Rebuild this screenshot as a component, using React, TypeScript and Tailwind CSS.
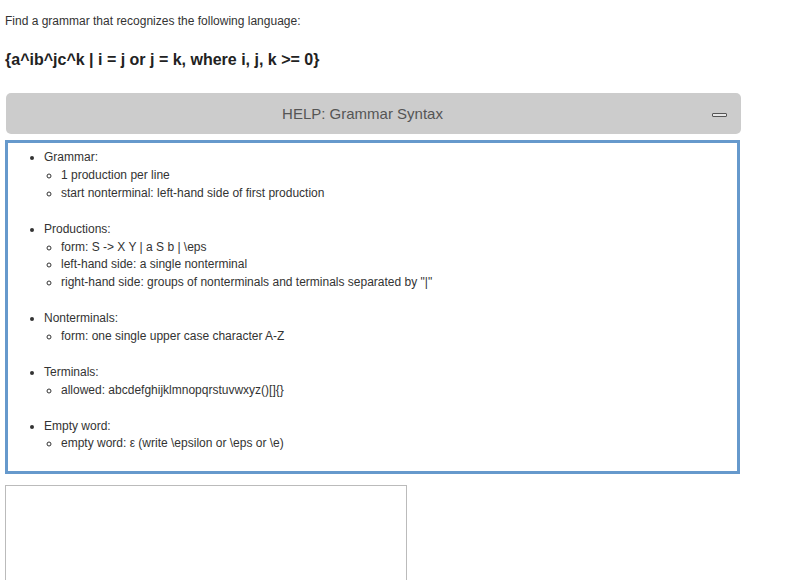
import React from 'react'

const sections: { title: string; items: string[] }[] = [
  { title: 'Grammar:', items: ['1 production per line', 'start nonterminal: left-hand side of first production'] },
  {
    title: 'Productions:',
    items: [
      'form: S -> X Y | a S b | \\eps',
      'left-hand side: a single nonterminal',
      'right-hand side: groups of nonterminals and terminals separated by "|"',
    ],
  },
  { title: 'Nonterminals:', items: ['form: one single upper case character A-Z'] },
  { title: 'Terminals:', items: ['allowed: abcdefghijklmnopqrstuvwxyz()[]{}'] },
  { title: 'Empty word:', items: ['empty word: \u03b5 (write \\epsilon or \\eps or \\e)'] },
]

export default function App() {
  return (
    <div className="min-h-[580px] bg-white px-[5px] text-[#333] font-['Liberation_Sans',Arial,sans-serif]">
      <p className="pt-[14px] text-[12px] leading-[14px]">Find a grammar that recognizes the following language:</p>
      <h3 className="mt-[22px] text-[16px] leading-[20px] font-bold text-[#222]">
        {'{a^ib^jc^k | i = j or j = k, where i, j, k >= 0}'}
      </h3>

      {/* help toggle */}
      <div className="relative mt-[23px] ml-[1px] w-[735px] h-[41px] rounded-[5px] bg-[#cccccc] flex items-center">
        <span className="flex-1 pt-[2px] pr-[22px] text-center text-[15px] text-[#555]">HELP: Grammar Syntax</span>
        <span className="absolute right-[14px] top-[20px] w-[15px] h-[4px] border border-[#555] bg-[#e6e6e6] rounded-[1px]" />
      </div>

      {/* help body */}
      <div className="mt-[6px] w-[735px] h-[334px] border-[3px] border-[#6699cc] pt-[6px] text-[12px] leading-[17.9px]">
        <ul className="list-disc pl-[36px]">
          {sections.map(s => (
            <li key={s.title} className="mb-[17.9px] last:mb-0">
              {s.title}
              <ul className="list-[circle] pl-[17px]">
                {s.items.map(i => (
                  <li key={i}>{i}</li>
                ))}
              </ul>
            </li>
          ))}
        </ul>
      </div>

      <textarea className="block mt-[11px] w-[402px] h-[120px] border border-[#bbbbbb] resize-none outline-none" />
    </div>
  )
}
